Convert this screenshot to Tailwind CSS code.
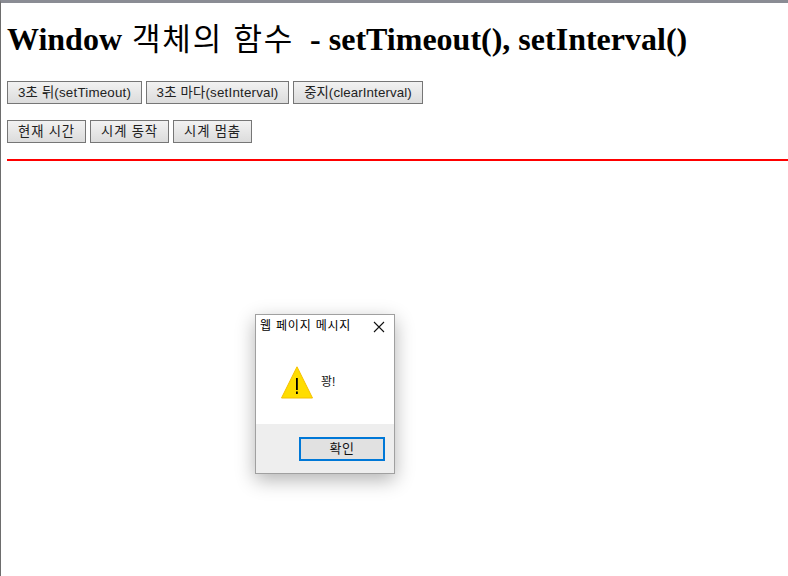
<!DOCTYPE html>
<html lang="ko">
<head>
    <meta charset="UTF-8">
    <title>Window 객체의 함수</title>
    <script src="https://cdn.jsdelivr.net/npm/@tailwindcss/browser@4"></script>
</head>
<body class="bg-white h-[576px] overflow-hidden relative font-['Liberation_Sans','Noto_Sans_CJK_KR',sans-serif]">
    <div class="h-[576px] border-t-[3px] border-t-[#8a8c94] border-l border-l-[#6d6d6d] pl-1.5">
        <h1 class="pt-[14px] h-[78px] text-[32px] leading-[40px] font-bold text-black whitespace-nowrap font-['Liberation_Serif','Noto_Sans_CJK_KR',serif]">Window <span class="font-normal font-['Noto_Sans_CJK_KR',sans-serif] text-[31px] tracking-[1.8px] ml-[2px] mr-[8px]">객체의 함수</span> - setTimeout(), setInterval()</h1>
        <div class="flex gap-1 h-[23px]">
            <button class="w-[135px] pt-px border border-[#767676] bg-gradient-to-b from-[#f2f2f2] to-[#dcdcdc] text-[13.33px] tracking-[0.2px] text-[#222] whitespace-nowrap">3초 뒤(setTimeout)</button>
            <button class="w-[143px] pt-px border border-[#767676] bg-gradient-to-b from-[#f2f2f2] to-[#dcdcdc] text-[13.33px] tracking-[0.2px] text-[#222] whitespace-nowrap">3초 마다(setInterval)</button>
            <button class="w-[130px] pt-px border border-[#767676] bg-gradient-to-b from-[#f2f2f2] to-[#dcdcdc] text-[13.33px] tracking-[0.1px] text-[#222] whitespace-nowrap">중지(clearInterval)</button>
        </div>
        <div class="flex gap-1 h-[23px] mt-4">
            <button class="w-[79px] pt-px border border-[#767676] bg-gradient-to-b from-[#f2f2f2] to-[#dcdcdc] text-[13.33px] tracking-[0.8px] text-[#222] whitespace-nowrap">현재 시간</button>
            <button class="w-[79px] pt-px border border-[#767676] bg-gradient-to-b from-[#f2f2f2] to-[#dcdcdc] text-[13.33px] tracking-[0.8px] text-[#222] whitespace-nowrap">시계 동작</button>
            <button class="w-[79px] pt-px border border-[#767676] bg-gradient-to-b from-[#f2f2f2] to-[#dcdcdc] text-[13.33px] tracking-[0.8px] text-[#222] whitespace-nowrap">시계 멈춤</button>
        </div>
        <hr class="mt-4 border-0 h-0.5 bg-[#ff0000]">
    </div>

    <!-- alert dialog -->
    <div class="absolute left-[255px] top-[314px] w-[140px] h-[160px] flex flex-col bg-white border border-[#a0a0a0] shadow-[0_6px_18px_rgba(0,0,0,0.3)]">
        <div class="flex justify-between h-[24px] pl-[4px] pr-[9px] pt-[4px]">
            <span class="text-[12px] leading-[14px] tracking-[0.8px] text-black whitespace-nowrap">웹 페이지 메시지</span>
            <svg class="mt-[2px]" width="12" height="12" viewBox="0 0 12 12" fill="none" stroke="#111" stroke-width="1.1"><path d="M1 1l10 10M11 1L1 11"/></svg>
        </div>
        <div class="flex-1 flex items-start pl-[25px] pt-[27px] gap-[7px]">
            <svg width="33" height="33" viewBox="0 0 33 33"><path d="M16 .8L31.5 32H.5z" fill="#ffdd00" stroke="#f5c000"/><rect x="15" y="12" width="1.8" height="12" fill="#000"/><rect x="15" y="25.5" width="1.8" height="2.5" fill="#000"/></svg>
            <span class="text-[12px] leading-[14px] mt-[9px] text-[#111]">꽝!</span>
        </div>
        <div class="h-[49px] bg-[#eeeeee] flex justify-end items-start pt-[13px] pr-[9px]">
            <button class="w-[86px] h-[24px] border-2 border-[#0078d7] bg-[#e1e1e1] text-[13px] tracking-[0.5px] text-[#111]">확인</button>
        </div>
    </div>
</body>
</html>
